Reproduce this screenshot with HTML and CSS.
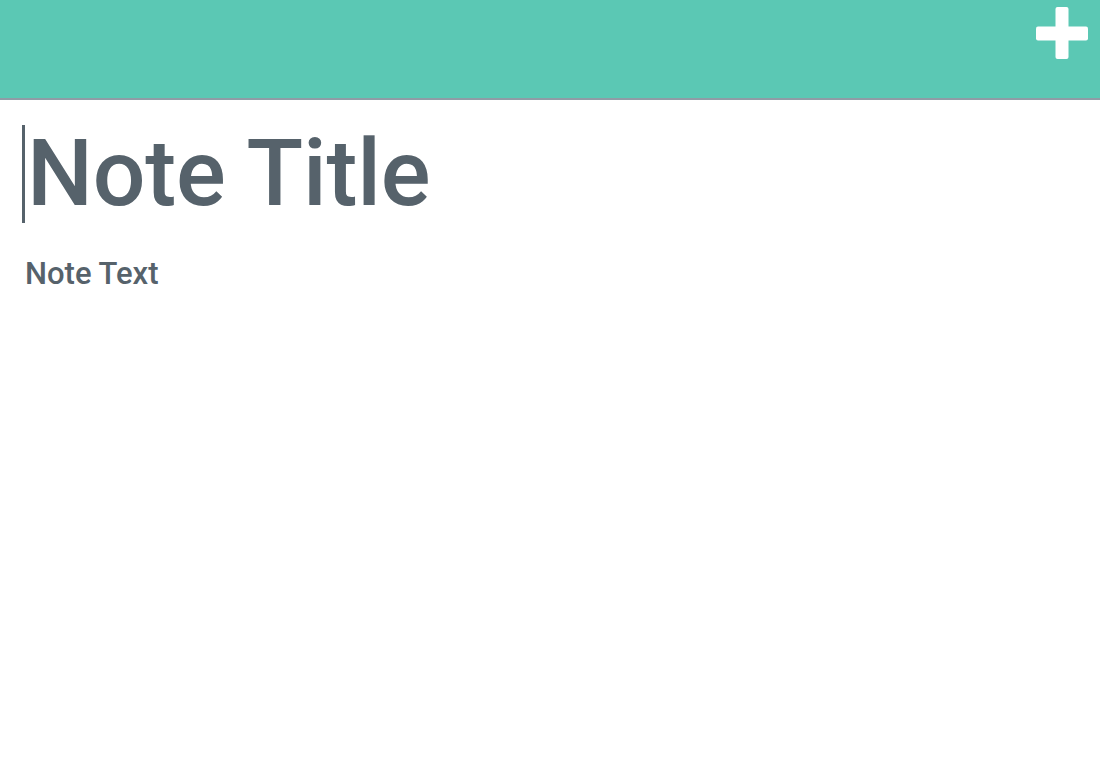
FILE: index.html
```html
<!DOCTYPE html>
<html>
<head>
<meta charset="utf-8">
<link rel="stylesheet" href="styles.css">
</head>
<body>
<header class="topbar">
  <button class="add-btn" aria-label="Add note">
    <svg width="52" height="52" viewBox="0 0 52 52"><rect x="19.5" y="0" width="13" height="52" rx="2" fill="#fff"/><rect x="0" y="19.5" width="52" height="14" rx="2" fill="#fff"/></svg>
  </button>
</header>
<main class="note">
  <h1 class="title"><span class="caret"></span>Note Title</h1>
  <p class="text">Note Text</p>
</main>
</body>
</html>
```
FILE: styles.css
```css
html, body { margin: 0; padding: 0; background: #fff; }
body { font-family: Roboto, "Noto Sans", sans-serif; color: #56626b; }
.topbar {
  height: 98px;
  background: #5bc8b4;
  border-bottom: 2px solid #8f9ca6;
  display: flex;
  justify-content: flex-end;
  align-items: flex-start;
}
.add-btn {
  background: none; border: 0; padding: 0;
  margin: 7px 12px 0 0;
  width: 52px; height: 52px; display: block;
}
.add-btn svg { display: block; }
.note { padding: 0 0 0 22px; }
.title {
  margin: 0; padding-top: 25px;
  font-size: 93px; font-weight: 500; line-height: 98px;
  display: flex; align-items: stretch;
  letter-spacing: -0.2px;
}
.caret {
  width: 3px; background: #56626b; margin-right: 2px; height: 98px;
}
.text {
  margin: 0; padding-left: 3px; padding-top: 34px;
  font-size: 31px; font-weight: 500; line-height: 34px;
}
```
